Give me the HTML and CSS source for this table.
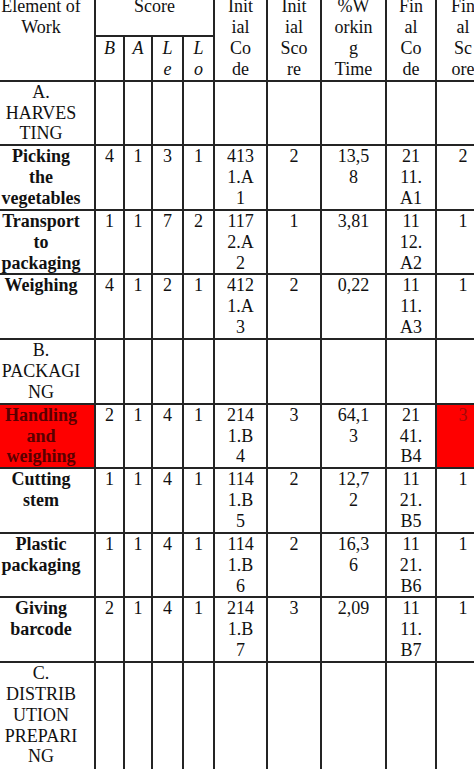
FILE: index.html
```
<!DOCTYPE html>
<html lang="en">
<head>
<meta charset="utf-8">
<title>Element of Work scores</title>
<link rel="stylesheet" href="styles.css">
</head>
<body>
<div class="frame">
<table class="ergo">
<colgroup>
<col class="c-el"><col class="c-b"><col class="c-a"><col class="c-le"><col class="c-lo"><col class="c-ic"><col class="c-is"><col class="c-wt"><col class="c-fc"><col class="c-fs">
</colgroup>
<thead>
<tr class="h1">
<th rowspan="2">Element of<br>Work</th>
<th colspan="4">Score</th>
<th rowspan="2">Init<br>ial<br>Co<br>de</th>
<th rowspan="2">Init<br>ial<br>Sco<br>re</th>
<th rowspan="2">%W<br>orkin<br>g<br>Time</th>
<th rowspan="2">Fin<br>al<br>Co<br>de</th>
<th rowspan="2">Fin<br>al<br>Sc<br>ore</th>
</tr>
<tr class="h2">
<th class="sub">B</th>
<th class="sub">A</th>
<th class="sub">L<br>e</th>
<th class="sub">L<br>o</th>
</tr>
</thead>
<tbody>
<tr class="row">
<td>A.<br>HARVES<br>TING</td><td></td><td></td><td></td><td></td><td></td><td></td><td></td><td></td><td></td>
</tr>
<tr class="row">
<td class="task">Picking<br>the<br>vegetables</td><td>4</td><td>1</td><td>3</td><td>1</td><td>413<br>1.A<br>1</td><td>2</td><td>13,5<br>8</td><td>21<br>11.<br>A1</td><td>2</td>
</tr>
<tr class="row">
<td class="task">Transport<br>to<br>packaging</td><td>1</td><td>1</td><td>7</td><td>2</td><td>117<br>2.A<br>2</td><td>1</td><td>3,81</td><td>11<br>12.<br>A2</td><td>1</td>
</tr>
<tr class="row">
<td class="task">Weighing</td><td>4</td><td>1</td><td>2</td><td>1</td><td>412<br>1.A<br>3</td><td>2</td><td>0,22</td><td>11<br>11.<br>A3</td><td>1</td>
</tr>
<tr class="row">
<td>B.<br>PACKAGI<br>NG</td><td></td><td></td><td></td><td></td><td></td><td></td><td></td><td></td><td></td>
</tr>
<tr class="row">
<td class="task hot">Handling<br>and<br>weighing</td><td>2</td><td>1</td><td>4</td><td>1</td><td>214<br>1.B<br>4</td><td>3</td><td>64,1<br>3</td><td>21<br>41.<br>B4</td><td class="hot-score">3</td>
</tr>
<tr class="row">
<td class="task">Cutting<br>stem</td><td>1</td><td>1</td><td>4</td><td>1</td><td>114<br>1.B<br>5</td><td>2</td><td>12,7<br>2</td><td>11<br>21.<br>B5</td><td>1</td>
</tr>
<tr class="row">
<td class="task">Plastic<br>packaging</td><td>1</td><td>1</td><td>4</td><td>1</td><td>114<br>1.B<br>6</td><td>2</td><td>16,3<br>6</td><td>11<br>21.<br>B6</td><td>1</td>
</tr>
<tr class="row">
<td class="task">Giving<br>barcode</td><td>2</td><td>1</td><td>4</td><td>1</td><td>214<br>1.B<br>7</td><td>3</td><td>2,09</td><td>11<br>11.<br>B7</td><td>1</td>
</tr>
<tr class="row-last">
<td>C.<br>DISTRIB<br>UTION<br>PREPARI<br>NG</td><td></td><td></td><td></td><td></td><td></td><td></td><td></td><td></td><td></td>
</tr>
</tbody>
</table>
</div>
</body>
</html>
```
FILE: styles.css
```
html, body {
  margin: 0;
  padding: 0;
  background: #ffffff;
}

body {
  overflow: hidden;
}

.frame {
  width: 474px;
  height: 769px;
  overflow: hidden;
}

.ergo {
  border-collapse: collapse;
  table-layout: fixed;
  width: 503px;
  margin: -5.7px 0 0 -14px;
  font-family: "Liberation Serif", "Times New Roman", serif;
  font-size: 18px;
  line-height: 20.85px;
  color: #111111;
}

.ergo th,
.ergo td {
  border: 2px solid #242424;
  padding: 0;
  text-align: center;
  vertical-align: top;
  font-weight: normal;
}

.ergo .sub {
  font-style: italic;
  padding-top: 1px;
}

.ergo .task {
  font-weight: bold;
}

.ergo .hot {
  background: #fe0000;
  color: #5a0000;
}

.ergo .hot-score {
  background: #fe0000;
  color: #a30a0a;
}

.c-el { width: 108px; }
.c-b { width: 29px; }
.c-a { width: 28px; }
.c-le { width: 31px; }
.c-lo { width: 31px; }
.c-ic { width: 53px; }
.c-is { width: 54px; }
.c-wt { width: 65px; }
.c-fc { width: 50px; }
.c-fs { width: 54px; }

.h1 { height: 40.4px; }
.h2 { height: 45px; }
.row { height: 64.6px; }
.row-last { height: 110px; }
```
